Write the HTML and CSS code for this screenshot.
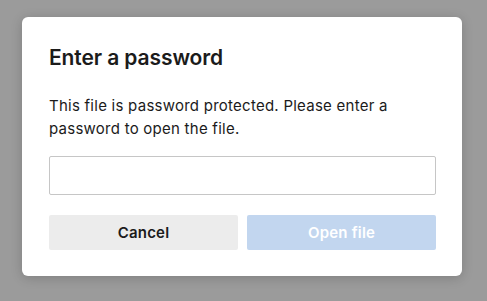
FILE: index.html
```html
<!DOCTYPE html>
<html>
<head>
<meta charset="utf-8">
<link rel="stylesheet" href="styles.css">
</head>
<body>
<div class="dialog">
  <h1 class="title">Enter a password</h1>
  <p class="message">This file is password protected. Please enter a password to open the file.</p>
  <input class="field" type="password">
  <div class="actions">
    <button class="btn btn-cancel">Cancel</button>
    <button class="btn btn-open">Open file</button>
  </div>
</div>
</body>
</html>
```
FILE: styles.css
```css
html, body {
  margin: 0;
  height: 100%;
}
body {
  background: #9b9b9b;
  padding: 17px 0 0 22px;
  box-sizing: border-box;
  font-family: Inter, "Liberation Sans", sans-serif;
  color: #1b1b1b;
}
.dialog {
  width: 440px;
  box-sizing: border-box;
  background: #ffffff;
  border-radius: 6px;
  padding: 28px 26px 26px 27px;
  box-shadow: 0 2px 12px rgba(0,0,0,0.18);
  display: flex;
  flex-direction: column;
}
.title {
  margin: 0;
  font-size: 21px;
  line-height: 26px;
  font-weight: 600;
  letter-spacing: -0.1px;
}
.message {
  margin: 23px 0 0;
  font-size: 15px;
  line-height: 23px;
  font-weight: 400;
  letter-spacing: 0.25px;
  width: 345px;
}
.field {
  margin: 16px 0 0;
  height: 39px;
  box-sizing: border-box;
  border: 1px solid #c6c6c6;
  border-radius: 2px;
  outline: none;
  padding: 0 10px;
  font: inherit;
}
.actions {
  margin-top: 20px;
  display: grid;
  grid-template-columns: 1fr 1fr;
  gap: 9px;
}
.btn {
  height: 35px;
  border: none;
  border-radius: 2px;
  font-family: Inter, "Liberation Sans", sans-serif;
  font-size: 15px;
  font-weight: 600;
  letter-spacing: 0.2px;
  padding: 0;
}
.btn-cancel {
  background: #ececec;
  color: #1b1b1b;
}
.btn-open {
  background: #c2d6ef;
  color: #ffffff;
}
```
